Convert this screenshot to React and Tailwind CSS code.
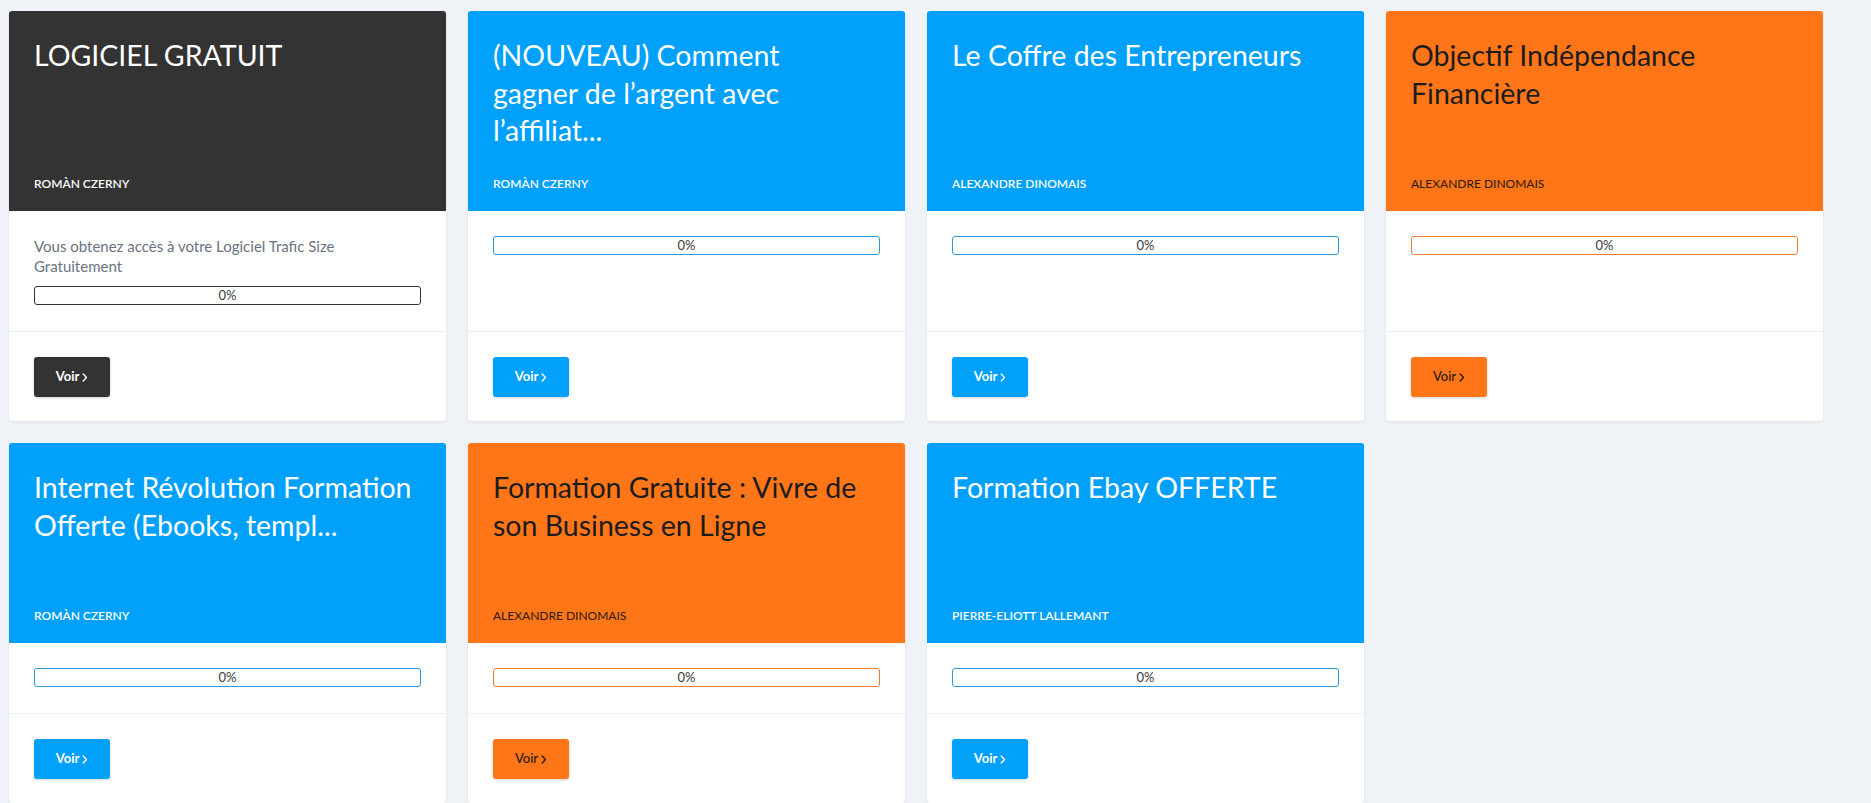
import React from "react";

const courses = [
  {
    title: ["LOGICIEL GRATUIT"],
    author: "ROMÀN CZERNY",
    theme: "dark",
    description: "Vous obtenez accès à votre Logiciel Trafic Size Gratuitement",
  },
  {
    title: ["(NOUVEAU) Comment", "gagner de l’argent avec", "l’affiliat..."],
    author: "ROMÀN CZERNY",
    theme: "blue",
  },
  {
    title: ["Le Coffre des Entrepreneurs"],
    author: "ALEXANDRE DINOMAIS",
    theme: "blue",
  },
  {
    title: ["Objectif Indépendance", "Financière"],
    author: "ALEXANDRE DINOMAIS",
    theme: "orange",
  },
  {
    title: ["Internet Révolution Formation", "Offerte (Ebooks, templ..."],
    author: "ROMÀN CZERNY",
    theme: "blue",
  },
  {
    title: ["Formation Gratuite : Vivre de", "son Business en Ligne"],
    author: "ALEXANDRE DINOMAIS",
    theme: "orange",
  },
  {
    title: ["Formation Ebay OFFERTE"],
    author: "PIERRE-ELIOTT LALLEMANT",
    theme: "blue",
  },
];

const themes = {
  dark: {
    header: "bg-[#333333] text-white",
    author: "font-semibold text-white",
    bar: "border-[#333333]",
    button: "bg-[#333333] text-white font-bold",
  },
  blue: {
    header: "bg-[#00a0fb] text-white",
    author: "font-semibold text-white",
    bar: "border-[#2a98e0]",
    button: "bg-[#00a0fb] text-white font-bold",
  },
  orange: {
    header: "bg-[#fe7618] text-[#1c1c1c]",
    author: "font-normal text-[#2a1a10]",
    bar: "border-[#ef7d33]",
    button: "bg-[#fe7618] text-[#2a1a10] font-medium",
  },
};

function Chevron() {
  return (
    <svg width="6" height="9" viewBox="0 0 6 9" fill="none" className="ml-[3px]">
      <path d="M1.2 1l3.3 3.5-3.3 3.5" stroke="currentColor" strokeWidth="1.4" strokeLinecap="round" strokeLinejoin="round" />
    </svg>
  );
}

function CourseCard({ course }) {
  const t = themes[course.theme];
  return (
    <div className="flex flex-col bg-white rounded-[3px] overflow-hidden shadow-[0_1px_3px_rgba(0,0,0,0.08)]">
      <div className={`flex flex-col justify-between h-[200px] px-[25px] pt-[26px] pb-[18px] ${t.header}`}>
        <h2 className="text-[28.5px] leading-[37.5px]">
          {course.title.map((line, i) => (
            <span key={i} className="block whitespace-nowrap">
              {line}
            </span>
          ))}
        </h2>
        <p className={`text-[12px] leading-[18px] ${t.author}`}>{course.author}</p>
      </div>
      <div className="flex-1 px-[25px] pt-[25px] pb-[26px]">
        {course.description && (
          <p className="text-[15px] leading-[20px] text-[#6b7380] mb-[10px]">{course.description}</p>
        )}
        <div className={`h-[19px] border rounded-[3px] flex items-center justify-center text-[13px] text-[#3a3a3a] ${t.bar}`}>
          0%
        </div>
      </div>
      <div className="border-t border-[#eceef2] px-[25px] pt-[25px] pb-[24px]">
        <button className={`flex items-center justify-center w-[76px] h-[40px] rounded-[3px] text-[13px] shadow-[0_1px_3px_rgba(0,0,0,0.18)] ${t.button}`}>
          Voir
          <Chevron />
        </button>
      </div>
    </div>
  );
}

export default function App() {
  return (
    <div className="min-h-screen bg-[#eff2f7] pl-[9px] pt-[11px] font-['Lato',_'Open_Sans',_sans-serif]">
      <div className="grid grid-cols-[repeat(4,437px)] gap-[22px]">
        {courses.map((course, i) => (
          <CourseCard key={i} course={course} />
        ))}
      </div>
    </div>
  );
}
